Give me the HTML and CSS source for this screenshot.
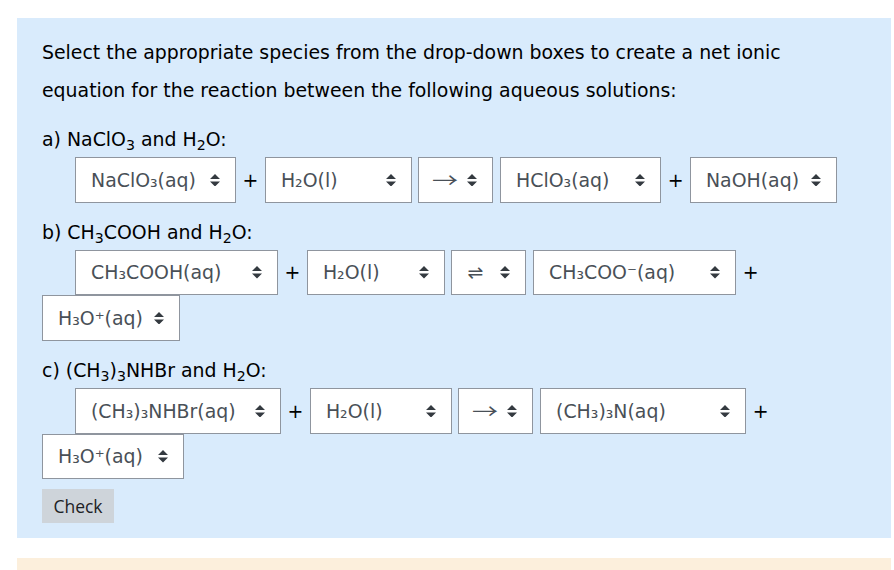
FILE: index.html
```html
<!DOCTYPE html>
<html lang="en">
<head>
<meta charset="utf-8">
<title>Net ionic equations</title>
<link rel="stylesheet" href="styles.css">
</head>
<body>
<div class="que">
  <div class="formulation">
    <p class="intro">Select the appropriate species from the drop-down boxes to create a net ionic equation for the reaction between the following aqueous solutions:</p>

    <p class="part">a) NaClO<sub>3</sub> and H<sub>2</sub>O:</p>
    <div class="eq">
      <span class="sel w161 first"><span class="opt">NaClO₃(aq)</span><svg class="caret" viewBox="0 0 4 5" aria-hidden="true"><path d="M2 0L0 2h4zm0 5L0 3h4z"/></svg></span>
      <span class="plus">+</span>
      <span class="sel w147"><span class="opt">H₂O(l)</span><svg class="caret" viewBox="0 0 4 5" aria-hidden="true"><path d="M2 0L0 2h4zm0 5L0 3h4z"/></svg></span>
      <span class="sel w75"><span class="opt arrow">→</span><svg class="caret" viewBox="0 0 4 5" aria-hidden="true"><path d="M2 0L0 2h4zm0 5L0 3h4z"/></svg></span>
      <span class="sel w161"><span class="opt">HClO₃(aq)</span><svg class="caret" viewBox="0 0 4 5" aria-hidden="true"><path d="M2 0L0 2h4zm0 5L0 3h4z"/></svg></span>
      <span class="plus">+</span>
      <span class="sel w147"><span class="opt">NaOH(aq)</span><svg class="caret" viewBox="0 0 4 5" aria-hidden="true"><path d="M2 0L0 2h4zm0 5L0 3h4z"/></svg></span>
    </div>

    <p class="part">b) CH<sub>3</sub>COOH and H<sub>2</sub>O:</p>
    <div class="eq">
      <span class="sel w203 first"><span class="opt">CH₃COOH(aq)</span><svg class="caret" viewBox="0 0 4 5" aria-hidden="true"><path d="M2 0L0 2h4zm0 5L0 3h4z"/></svg></span>
      <span class="plus">+</span>
      <span class="sel w138"><span class="opt">H₂O(l)</span><svg class="caret" viewBox="0 0 4 5" aria-hidden="true"><path d="M2 0L0 2h4zm0 5L0 3h4z"/></svg></span>
      <span class="sel w75"><span class="opt equil">⇌</span><svg class="caret" viewBox="0 0 4 5" aria-hidden="true"><path d="M2 0L0 2h4zm0 5L0 3h4z"/></svg></span>
      <span class="sel w203"><span class="opt">CH₃COO⁻(aq)</span><svg class="caret" viewBox="0 0 4 5" aria-hidden="true"><path d="M2 0L0 2h4zm0 5L0 3h4z"/></svg></span>
      <span class="plus">+</span>
      <span class="sel w138"><span class="opt">H₃O⁺(aq)</span><svg class="caret" viewBox="0 0 4 5" aria-hidden="true"><path d="M2 0L0 2h4zm0 5L0 3h4z"/></svg></span>
    </div>

    <p class="part">c) (CH<sub>3</sub>)<sub>3</sub>NHBr and H<sub>2</sub>O:</p>
    <div class="eq">
      <span class="sel w206 first"><span class="opt">(CH₃)₃NHBr(aq)</span><svg class="caret" viewBox="0 0 4 5" aria-hidden="true"><path d="M2 0L0 2h4zm0 5L0 3h4z"/></svg></span>
      <span class="plus">+</span>
      <span class="sel w142"><span class="opt">H₂O(l)</span><svg class="caret" viewBox="0 0 4 5" aria-hidden="true"><path d="M2 0L0 2h4zm0 5L0 3h4z"/></svg></span>
      <span class="sel w75"><span class="opt arrow">→</span><svg class="caret" viewBox="0 0 4 5" aria-hidden="true"><path d="M2 0L0 2h4zm0 5L0 3h4z"/></svg></span>
      <span class="sel w206"><span class="opt">(CH₃)₃N(aq)</span><svg class="caret" viewBox="0 0 4 5" aria-hidden="true"><path d="M2 0L0 2h4zm0 5L0 3h4z"/></svg></span>
      <span class="plus">+</span>
      <span class="sel w142"><span class="opt">H₃O⁺(aq)</span><svg class="caret" viewBox="0 0 4 5" aria-hidden="true"><path d="M2 0L0 2h4zm0 5L0 3h4z"/></svg></span>
    </div>

    <button class="check" type="button">Check</button>
  </div>
  <div class="outcome"></div>
</div>
</body>
</html>
```

FILE: styles.css
```css
html, body {
  margin: 0;
  padding: 0;
  background: #ffffff;
}

.que {
  padding: 18px 0 0 17px;
  width: 874px;
}

.formulation {
  box-sizing: border-box;
  width: 874px;
  padding: 16.25px 40px 15px 25px;
  background: #d9ebfc;
  color: #000000;
  font-family: "DejaVu Sans", Verdana, sans-serif;
  font-size: 18.9px;
}

.intro {
  margin: 0 0 15.6px;
  line-height: 37.5px;
}

.part {
  margin: 0 0 4px;
  line-height: 28.125px;
}

.part sub {
  font-size: 75%;
  line-height: 0;
  vertical-align: -0.25em;
}

.eq {
  display: flex;
  flex-wrap: wrap;
  align-items: center;
  column-gap: 6.6px;
  row-gap: 0;
  margin-bottom: 15px;
}

.eq:last-of-type {
  margin-bottom: 0;
}

.sel {
  box-sizing: border-box;
  height: 45.6px;
  display: flex;
  align-items: center;
  justify-content: space-between;
  padding: 0 15px;
  background: #ffffff;
  border: 1px solid #8f959e;
  color: #495057;
  line-height: 28.125px;
  white-space: nowrap;
}

.sel.first {
  margin-left: 33px;
}

.opt.arrow {
  display: inline-block;
  font-family: "Noto Sans CJK JP", sans-serif;
  font-size: 20px;
  margin-left: -2px;
  transform: scaleX(1.3);
  transform-origin: left center;
}

.caret {
  width: 10px;
  height: 12.5px;
  flex: none;
  fill: #343a40;
}

.w75 { width: 75px; }
.w138 { width: 138px; }
.w142 { width: 142px; }
.w147 { width: 147px; }
.w161 { width: 161px; }
.w203 { width: 203px; }
.w206 { width: 206px; }

.plus {
  width: 15.7px;
  text-align: center;
  line-height: 28.125px;
  color: #000000;
}

.check {
  display: block;
  margin-top: 9.8px;
  width: 72px;
  height: 34px;
  padding: 0;
  border: none;
  border-radius: 0;
  background: #ced4da;
  color: #1d2125;
  font-family: "Open Sans", sans-serif;
  font-size: 17.5px;
  line-height: 34px;
  text-align: center;
}

.outcome {
  margin-top: 20px;
  height: 40px;
  background: #fcefdc;
}
```
